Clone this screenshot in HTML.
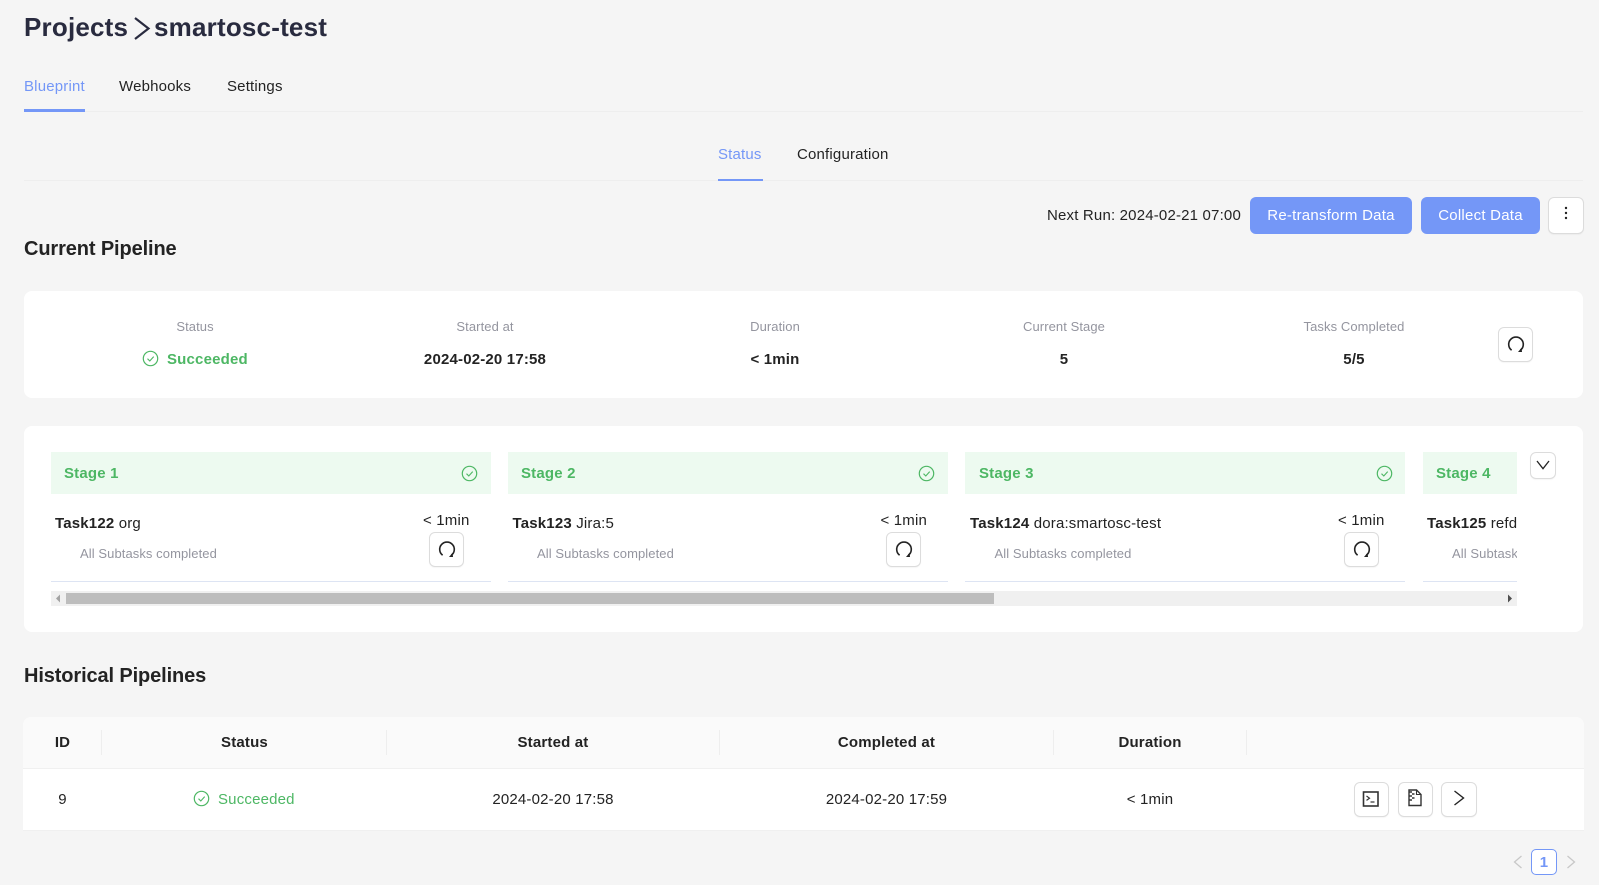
<!DOCTYPE html>
<html><head><meta charset="utf-8"><title>Projects</title>
<style>
*{box-sizing:border-box}
html,body{margin:0;padding:0;width:1599px;height:885px;overflow:hidden;background:#f5f5f5}
body{position:relative;font-family:"Liberation Sans",sans-serif;font-size:15px;color:#232323;letter-spacing:.18px}
.t{position:absolute;white-space:nowrap;line-height:20px}
.c{transform:translateX(-50%)}
.box{position:absolute}
.card{position:absolute;background:#fff;border-radius:8px}
.btn{position:absolute;background:#fff;border:1px solid #dcdcdc;border-radius:6px;box-shadow:0 1px 1px rgba(0,0,0,.04)}
.btn svg{position:absolute;left:50%;top:50%;transform:translate(-50%,-50%)}
.pri{position:absolute;background:#7497f7;color:#fff;border-radius:6px;top:197px;height:37px;line-height:37px;text-align:center;letter-spacing:.24px}
.g{color:#94959f;font-size:13px;letter-spacing:.08px}
.b{font-weight:700}
.green{color:#4db764}
.sh{position:absolute;top:0;height:42px;width:440px;background:#edfaf0}
.ln{position:absolute;top:129px;height:1px;width:440px;background:#dde4f3}
.sep{position:absolute;top:730px;height:25px;width:1px;background:#eeeeee}
.h{font-size:20px;line-height:24px;letter-spacing:-.12px}
.ti{font-size:26px;line-height:34px;color:#292b3f;letter-spacing:.2px}
</style></head><body>

<div class="t b ti" style="left:24px;top:10px">Projects</div>
<svg class="box" style="left:133px;top:16px" width="18" height="26" viewBox="0 0 18 26"><path d="M2 2L15.5 12.5L2 23" fill="none" stroke="#292b3f" stroke-width="2.2"/></svg>
<div class="t b ti" style="left:154px;top:10px">smartosc-test</div>

<div class="t" style="left:24px;top:77px;color:#7497f7">Blueprint</div>
<div class="t" style="left:119px;top:77px">Webhooks</div>
<div class="t" style="left:227px;top:77px">Settings</div>
<div class="box" style="left:24px;top:111px;width:1559px;height:1px;background:#eeeeee"></div>
<div class="box" style="left:24px;top:109px;width:61px;height:3px;background:#7497f7"></div>

<div class="t" style="left:718px;top:145px;color:#7497f7">Status</div>
<div class="t" style="left:797px;top:145px">Configuration</div>
<div class="box" style="left:24px;top:180px;width:1559px;height:1px;background:#eeeeee"></div>
<div class="box" style="left:718px;top:179px;width:45px;height:2px;background:#7497f7"></div>

<div class="t" style="left:1047px;top:205px;line-height:22px">Next Run: 2024-02-21 07:00</div>
<div class="pri" style="left:1250px;width:162px;">Re-transform Data</div>
<div class="pri" style="left:1421px;width:119px;">Collect Data</div>
<div class="btn" style="left:1548px;top:197px;width:36px;height:37px"><svg style="margin-top:-3px" width="4" height="14" viewBox="0 0 4 14"><circle cx="2" cy="2" r="1.2" fill="#232323"/><circle cx="2" cy="7" r="1.2" fill="#232323"/><circle cx="2" cy="12" r="1.2" fill="#232323"/></svg></div>

<div class="t b h" style="left:24px;top:237px">Current Pipeline</div>

<div class="card" style="left:24px;top:291px;width:1559px;height:107px"></div>
<div class="t g c" style="left:195px;top:317px">Status</div>
<div class="t g c" style="left:485px;top:317px">Started at</div>
<div class="t g c" style="left:775px;top:317px">Duration</div>
<div class="t g c" style="left:1064px;top:317px">Current Stage</div>
<div class="t g c" style="left:1354px;top:317px">Tasks Completed</div>
<svg class="box" style="left:142px;top:350px" width="17" height="17" viewBox="0 0 17 17"><circle cx="8.5" cy="8.5" r="7.2" fill="none" stroke="#4db764" stroke-width="1.2"/><path d="M5.5 8.7L7.8 11L11.7 6.6" fill="none" stroke="#4db764" stroke-width="1.1"/></svg>
<div class="t b green" style="left:167px;top:350px">Succeeded</div>
<div class="t b c" style="left:485px;top:350px">2024-02-20 17:58</div>
<div class="t b c" style="left:775px;top:350px">&lt; 1min</div>
<div class="t b c" style="left:1064px;top:350px">5</div>
<div class="t b c" style="left:1354px;top:350px">5/5</div>
<div class="btn" style="left:1498px;top:327px;width:35px;height:35px"><svg style="margin-top:-1px" width="18" height="18" viewBox="0 0 18 18"><path d="M4.6 15.2A7.3 7.3 0 1 1 13.4 15.2" fill="none" stroke="#232323" stroke-width="1.6"/><path d="M11 17L15 17L14.6 12.8Z" fill="#232323"/></svg></div>

<div class="card" style="left:24px;top:426px;width:1559px;height:206px"></div>
<div class="box" style="left:51px;top:452px;width:1466px;height:139px;overflow:hidden">
  <div class="sh" style="left:0"></div>
  <div class="sh" style="left:457px"></div>
  <div class="sh" style="left:914px"></div>
  <div class="sh" style="left:1372px"></div>
  <div class="t b green" style="left:13px;top:12px">Stage 1</div>
  <div class="t b green" style="left:470px;top:12px">Stage 2</div>
  <div class="t b green" style="left:928px;top:12px">Stage 3</div>
  <div class="t b green" style="left:1385px;top:12px">Stage 4</div>
  <svg class="box" style="left:410px;top:13px" width="17" height="17" viewBox="0 0 17 17"><circle cx="8.5" cy="8.5" r="7.2" fill="none" stroke="#4db764" stroke-width="1.2"/><path d="M5.5 8.7L7.8 11L11.7 6.6" fill="none" stroke="#4db764" stroke-width="1.1"/></svg>
  <svg class="box" style="left:867px;top:13px" width="17" height="17" viewBox="0 0 17 17"><circle cx="8.5" cy="8.5" r="7.2" fill="none" stroke="#4db764" stroke-width="1.2"/><path d="M5.5 8.7L7.8 11L11.7 6.6" fill="none" stroke="#4db764" stroke-width="1.1"/></svg>
  <svg class="box" style="left:1325px;top:13px" width="17" height="17" viewBox="0 0 17 17"><circle cx="8.5" cy="8.5" r="7.2" fill="none" stroke="#4db764" stroke-width="1.2"/><path d="M5.5 8.7L7.8 11L11.7 6.6" fill="none" stroke="#4db764" stroke-width="1.1"/></svg>

  <div class="t" style="left:4px;top:62px"><span class="b">Task122</span> org</div>
  <div class="t" style="left:461.5px;top:62px"><span class="b">Task123</span> Jira:5</div>
  <div class="t" style="left:919px;top:62px"><span class="b">Task124</span> dora:smartosc-test</div>
  <div class="t" style="left:1376px;top:62px"><span class="b">Task125</span> refdiff</div>
  <div class="t g" style="left:29px;top:92px">All Subtasks completed</div>
  <div class="t g" style="left:486px;top:92px">All Subtasks completed</div>
  <div class="t g" style="left:943.5px;top:92px">All Subtasks completed</div>
  <div class="t g" style="left:1401px;top:92px">All Subtasks completed</div>
  <div class="t" style="left:372px;top:59px">&lt; 1min</div>
  <div class="t" style="left:829.5px;top:59px">&lt; 1min</div>
  <div class="t" style="left:1287px;top:59px">&lt; 1min</div>
  <div class="btn" style="left:378px;top:80px;width:35px;height:35px"><svg style="margin-top:-1px" width="18" height="18" viewBox="0 0 18 18"><path d="M4.6 15.2A7.3 7.3 0 1 1 13.4 15.2" fill="none" stroke="#232323" stroke-width="1.6"/><path d="M11 17L15 17L14.6 12.8Z" fill="#232323"/></svg></div>
  <div class="btn" style="left:835px;top:80px;width:35px;height:35px"><svg style="margin-top:-1px" width="18" height="18" viewBox="0 0 18 18"><path d="M4.6 15.2A7.3 7.3 0 1 1 13.4 15.2" fill="none" stroke="#232323" stroke-width="1.6"/><path d="M11 17L15 17L14.6 12.8Z" fill="#232323"/></svg></div>
  <div class="btn" style="left:1293px;top:80px;width:35px;height:35px"><svg style="margin-top:-1px" width="18" height="18" viewBox="0 0 18 18"><path d="M4.6 15.2A7.3 7.3 0 1 1 13.4 15.2" fill="none" stroke="#232323" stroke-width="1.6"/><path d="M11 17L15 17L14.6 12.8Z" fill="#232323"/></svg></div>
  <div class="ln" style="left:0"></div>
  <div class="ln" style="left:457px"></div>
  <div class="ln" style="left:914px"></div>
  <div class="ln" style="left:1372px"></div>
</div>
<div class="box" style="left:51px;top:591px;width:1466px;height:15px;background:#f0f0f0"></div>
<div class="box" style="left:66px;top:593px;width:928px;height:11px;background:#bdbdbd"></div>
<svg class="box" style="left:55px;top:594px" width="6" height="9" viewBox="0 0 6 9"><path d="M5 0.5V8.5L1 4.5Z" fill="#a3a3a3"/></svg>
<svg class="box" style="left:1507px;top:594px" width="6" height="9" viewBox="0 0 6 9"><path d="M1 0.5V8.5L5 4.5Z" fill="#505050"/></svg>
<div class="btn" style="left:1530px;top:452px;width:26px;height:27px"><svg style="margin-top:-1px" width="14" height="10" viewBox="0 0 14 10"><path d="M1 1L7 8.7L13 1" fill="none" stroke="#232323" stroke-width="1.3"/></svg></div>

<div class="t b h" style="left:24px;top:664px">Historical Pipelines</div>

<div class="box" style="left:23px;top:717px;width:1561px;height:114px;background:#fff;border-radius:8px 8px 0 0;border-bottom:1px solid #f0f0f0;overflow:hidden">
  <div style="height:52px;background:#fafafa;border-bottom:1px solid #f0f0f0"></div>
</div>
<div class="sep" style="left:101px"></div>
<div class="sep" style="left:386px"></div>
<div class="sep" style="left:719px"></div>
<div class="sep" style="left:1053px"></div>
<div class="sep" style="left:1246px"></div>
<div class="t b c" style="left:62.5px;top:733px">ID</div>
<div class="t b c" style="left:244.5px;top:733px">Status</div>
<div class="t b c" style="left:553px;top:733px">Started at</div>
<div class="t b c" style="left:886.5px;top:733px">Completed at</div>
<div class="t b c" style="left:1150px;top:733px">Duration</div>

<div class="t c" style="left:62.5px;top:790px">9</div>
<svg class="box" style="left:193px;top:790px" width="17" height="17" viewBox="0 0 17 17"><circle cx="8.5" cy="8.5" r="7.2" fill="none" stroke="#4db764" stroke-width="1.2"/><path d="M5.5 8.7L7.8 11L11.7 6.6" fill="none" stroke="#4db764" stroke-width="1.1"/></svg>
<div class="t green" style="left:218px;top:790px">Succeeded</div>
<div class="t c" style="left:553px;top:790px">2024-02-20 17:58</div>
<div class="t c" style="left:886.5px;top:790px">2024-02-20 17:59</div>
<div class="t c" style="left:1150px;top:790px">&lt; 1min</div>

<div class="btn" style="left:1354px;top:782px;width:35px;height:35px"><svg style="margin-top:-1px;margin-left:-1px" width="17" height="17" viewBox="0 0 17 17"><rect x="1" y="1.5" width="14.5" height="14" fill="none" stroke="#333" stroke-width="1.6"/><path d="M4 5.5L7 7.7L4 9.9" fill="none" stroke="#333" stroke-width="1.2"/><path d="M8 11.5H12" stroke="#333" stroke-width="1.2"/></svg></div>
<div class="btn" style="left:1398px;top:782px;width:35px;height:35px"><svg style="margin-top:-2px;margin-left:-1px" width="15" height="18" viewBox="0 0 15 18"><path d="M1.5 1H9L13.5 5.5V16.5H1.5Z" fill="none" stroke="#333" stroke-width="1.4"/><path d="M9 1V5.5H13.5" fill="none" stroke="#333" stroke-width="1.1"/><path d="M2 3H4.5M4.5 5H7M2 7H4.5M4.5 9H7M2 11H4.5" stroke="#333" stroke-width="1.6"/></svg></div>
<div class="btn" style="left:1441px;top:782px;width:36px;height:35px"><svg style="margin-top:-2px" width="12" height="16" viewBox="0 0 12 16"><path d="M1.5 1L10.5 8L1.5 15" fill="none" stroke="#232323" stroke-width="1.4"/></svg></div>

<svg class="box" style="left:1513px;top:855px" width="10" height="14" viewBox="0 0 10 14"><path d="M8.5 1L1.5 7L8.5 13" fill="none" stroke="#c8c8c8" stroke-width="1.3"/></svg>
<div class="box" style="left:1531px;top:849px;width:26px;height:26px;border:1px solid #7497f7;border-radius:5px;background:#fff;color:#7497f7;font-weight:700;text-align:center;line-height:26px">1</div>
<svg class="box" style="left:1566px;top:855px" width="10" height="14" viewBox="0 0 10 14"><path d="M1.5 1L8.5 7L1.5 13" fill="none" stroke="#c8c8c8" stroke-width="1.3"/></svg>

</body></html>
